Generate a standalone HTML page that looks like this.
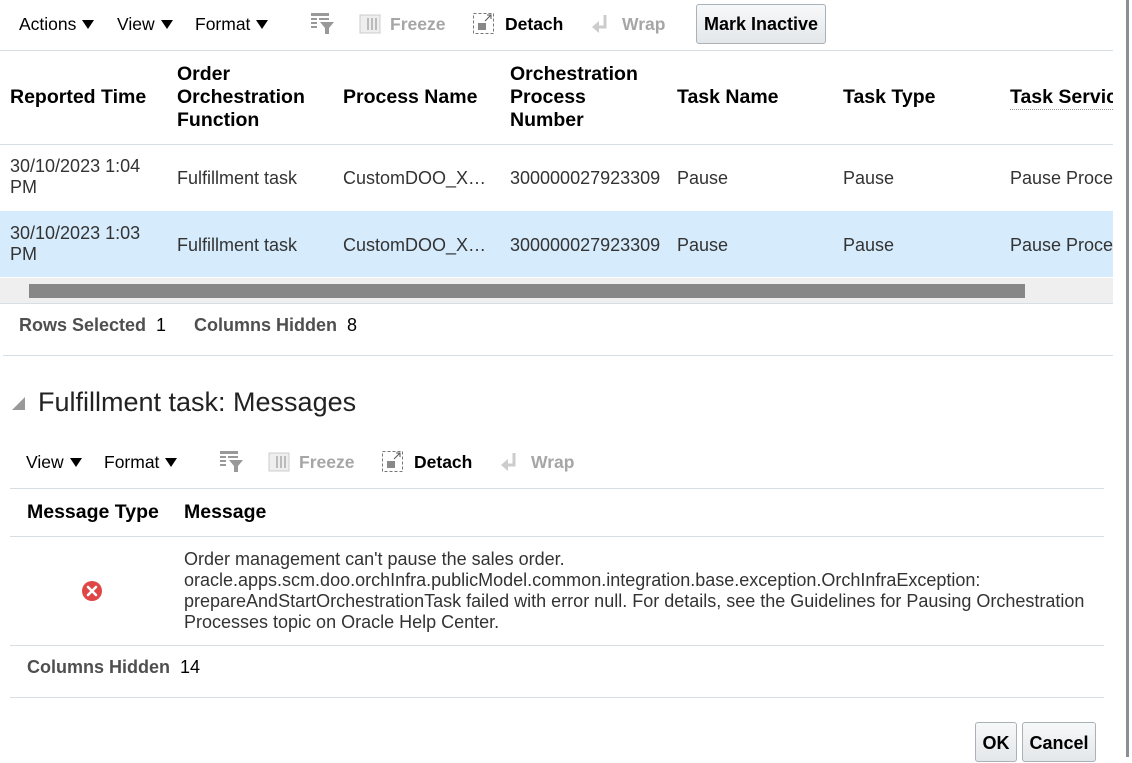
<!DOCTYPE html>
<html><head><style>
body{margin:0;width:1132px;height:757px;background:#fff;position:relative;overflow:hidden;font-family:"Liberation Sans",Arial,sans-serif;color:#333;}
.a{position:absolute;white-space:nowrap;}
.tb{font-size:17.5px;color:#000;}
.dis{color:#a6a6a6;font-weight:bold;}
.b{font-weight:bold;}
.h{font-size:19.5px;font-weight:bold;color:#000;line-height:23px;}
.c{font-size:18px;color:#333;line-height:21px;}
.line{position:absolute;height:1px;background:#d6dfe6;}
.tri{display:inline-block;width:0;height:0;border-left:6px solid transparent;border-right:6px solid transparent;border-top:9px solid #000;margin-left:6px;vertical-align:1px;}
.btn{position:absolute;border:1px solid #a9b1b9;border-radius:3px;background:linear-gradient(#f7f8f9,#e3e7ea);font-weight:bold;font-size:18px;color:#000;text-align:center;box-sizing:border-box;}
.ft{font-size:18px;font-weight:bold;color:#4f4f4f;}
</style></head><body>
<div class="a tb" style="left:19px;top:14px">Actions<span class="tri"></span></div>
<div class="a tb" style="left:117px;top:14px">View<span class="tri"></span></div>
<div class="a tb" style="left:195px;top:14px">Format<span class="tri"></span></div>
<svg class="a" style="left:310px;top:12px" width="26" height="24"><g fill="#999"><rect x="1" y="1" width="18" height="3"/><rect x="1" y="6" width="6" height="2"/><rect x="9" y="6" width="10" height="2"/><rect x="1" y="10" width="6" height="2"/><rect x="1" y="14" width="6" height="2"/><path d="M10 10h14l-5 6v6h-4v-6z"/></g></svg>
<svg class="a" style="left:359px;top:14px" width="22" height="20"><rect x="1" y="1" width="20" height="18" fill="#eee" stroke="#ccc"/><g fill="#bbb"><rect x="8" y="4" width="2" height="12"/><rect x="12" y="4" width="2" height="12"/><rect x="16" y="4" width="2" height="12"/></g></svg>
<div class="a tb dis" style="left:390px;top:14px">Freeze</div>
<svg class="a" style="left:472px;top:12px" width="24" height="24"><rect x="1.5" y="1.5" width="20" height="20" fill="none" stroke="#777" stroke-dasharray="3 2"/><rect x="6" y="11" width="8" height="7" fill="#888"/><path d="M13 9l6-6M15 3h4v4" stroke="#555" fill="none"/></svg>
<div class="a tb b" style="left:505px;top:14px">Detach</div>
<svg class="a" style="left:590px;top:13px" width="22" height="22"><path d="M15 2v12H7" stroke="#ccc" stroke-width="3" fill="none"/><path d="M2 14l7-6v12z" fill="#ccc"/></svg>
<div class="a tb dis" style="left:622px;top:14px">Wrap</div>
<div class="btn" style="left:696px;top:4px;width:130px;height:40px;line-height:38px">Mark Inactive</div>
<div class="line" style="left:0;top:50px;width:1113px"></div>
<div class="a h" style="left:10px;top:86px">Reported Time</div>
<div class="a h" style="left:177px;top:63px">Order<br>Orchestration<br>Function</div>
<div class="a h" style="left:343px;top:86px">Process Name</div>
<div class="a h" style="left:510px;top:63px">Orchestration<br>Process<br>Number</div>
<div class="a h" style="left:677px;top:86px">Task Name</div>
<div class="a h" style="left:843px;top:86px">Task Type</div>
<div class="a h" style="left:1010px;top:86px;border-bottom:1px dotted #999;width:103px;overflow:hidden">Task Service</div>
<div class="line" style="left:0;top:144px;width:1113px"></div>
<div class="a c" style="left:10px;top:156px">30/10/2023 1:04<br>PM</div>
<div class="a c" style="left:177px;top:168px">Fulfillment task</div>
<div class="a c" style="left:343px;top:168px">CustomDOO_X…</div>
<div class="a c" style="left:510px;top:168px">300000027923309</div>
<div class="a c" style="left:677px;top:168px">Pause</div>
<div class="a c" style="left:843px;top:168px">Pause</div>
<div class="a c" style="left:1010px;top:168px;width:103px;overflow:hidden">Pause Process</div>
<div class="a" style="left:0;top:211px;width:1113px;height:66px;background:#d6ebfc"></div>
<div class="a c" style="left:10px;top:223px">30/10/2023 1:03<br>PM</div>
<div class="a c" style="left:177px;top:235px">Fulfillment task</div>
<div class="a c" style="left:343px;top:235px">CustomDOO_X…</div>
<div class="a c" style="left:510px;top:235px">300000027923309</div>
<div class="a c" style="left:677px;top:235px">Pause</div>
<div class="a c" style="left:843px;top:235px">Pause</div>
<div class="a c" style="left:1010px;top:235px;width:103px;overflow:hidden">Pause Process</div>
<div class="a" style="left:0;top:278px;width:1113px;height:25px;background:#efefef"></div>
<div class="a" style="left:29px;top:284px;width:996px;height:14px;background:#878787"></div>
<div class="line" style="left:0;top:303px;width:1113px"></div>
<div class="a ft" style="left:19px;top:315px">Rows Selected <span style="color:#000;font-weight:normal">&nbsp;1</span></div>
<div class="a ft" style="left:194px;top:315px">Columns Hidden <span style="color:#000;font-weight:normal">&nbsp;8</span></div>
<div class="line" style="left:3px;top:355px;width:1110px"></div>
<svg class="a" style="left:11px;top:395px" width="16" height="16"><path d="M14 2v13H1z" fill="#999"/></svg>
<div class="a" style="left:38px;top:387px;font-size:27px;color:#222">Fulfillment task: Messages</div>
<div class="a tb" style="left:26px;top:452px">View<span class="tri"></span></div>
<div class="a tb" style="left:104px;top:452px">Format<span class="tri"></span></div>
<svg class="a" style="left:219px;top:450px" width="26" height="24"><g fill="#999"><rect x="1" y="1" width="18" height="3"/><rect x="1" y="6" width="6" height="2"/><rect x="9" y="6" width="10" height="2"/><rect x="1" y="10" width="6" height="2"/><rect x="1" y="14" width="6" height="2"/><path d="M10 10h14l-5 6v6h-4v-6z"/></g></svg>
<svg class="a" style="left:268px;top:452px" width="22" height="20"><rect x="1" y="1" width="20" height="18" fill="#eee" stroke="#ccc"/><g fill="#bbb"><rect x="8" y="4" width="2" height="12"/><rect x="12" y="4" width="2" height="12"/><rect x="16" y="4" width="2" height="12"/></g></svg>
<div class="a tb dis" style="left:299px;top:452px">Freeze</div>
<svg class="a" style="left:381px;top:450px" width="24" height="24"><rect x="1.5" y="1.5" width="20" height="20" fill="none" stroke="#777" stroke-dasharray="3 2"/><rect x="6" y="11" width="8" height="7" fill="#888"/><path d="M13 9l6-6M15 3h4v4" stroke="#555" fill="none"/></svg>
<div class="a tb b" style="left:414px;top:452px">Detach</div>
<svg class="a" style="left:499px;top:451px" width="22" height="22"><path d="M15 2v12H7" stroke="#ccc" stroke-width="3" fill="none"/><path d="M2 14l7-6v12z" fill="#ccc"/></svg>
<div class="a tb dis" style="left:531px;top:452px">Wrap</div>
<div class="line" style="left:10px;top:488px;width:1094px"></div>
<div class="a h" style="left:27px;top:501px">Message Type</div>
<div class="a h" style="left:184px;top:501px">Message</div>
<div class="line" style="left:10px;top:536px;width:1094px"></div>
<svg class="a" style="left:81px;top:580px" width="22" height="22"><circle cx="11" cy="11" r="10" fill="#e04646"/><path d="M7 7l8 8M15 7l-8 8" stroke="#fff" stroke-width="2.6" stroke-linecap="round"/></svg>
<div class="a c" style="left:184px;top:549px">Order management can't pause the sales order.<br>oracle.apps.scm.doo.orchInfra.publicModel.common.integration.base.exception.OrchInfraException:<br>prepareAndStartOrchestrationTask failed with error null. For details, see the Guidelines for Pausing Orchestration<br>Processes topic on Oracle Help Center.</div>
<div class="line" style="left:10px;top:645px;width:1094px"></div>
<div class="a ft" style="left:27px;top:657px">Columns Hidden <span style="color:#000;font-weight:normal">&nbsp;14</span></div>
<div class="line" style="left:10px;top:697px;width:1094px"></div>
<div class="btn" style="left:975px;top:722px;width:42px;height:40px;line-height:40px">OK</div>
<div class="btn" style="left:1022px;top:722px;width:74px;height:40px;line-height:40px">Cancel</div>
<div class="a" style="left:1126px;top:0;width:3px;height:757px;background:#8a8f94"></div>
</body></html>
